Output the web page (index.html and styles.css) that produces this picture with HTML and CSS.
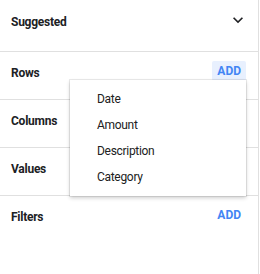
FILE: index.html
```html
<!DOCTYPE html>
<html lang="en">
<head>
    <meta charset="UTF-8">
    <meta name="viewport" content="width=device-width, initial-scale=1.0">
    <title>Pivot table editor</title>
    <link rel="stylesheet" href="styles.css">
</head>
<body>
    <div class="panel">
        <div class="section section-top">
            <div class="section-head">
                <span class="label">Suggested</span>
                <svg class="chevron" width="20" height="20" viewBox="0 0 24 24">
                    <path d="M16.59 8.59L12 13.17 7.41 8.59 6 10l6 6 6-6z" fill="#202124"/>
                </svg>
            </div>
        </div>

        <div class="section has-menu">
            <div class="section-head">
                <span class="label">Rows</span>
                <button class="add active">ADD</button>
            </div>
            <!-- dropdown opened from the Rows ADD button -->
            <ul class="menu">
                <li>Date</li>
                <li>Amount</li>
                <li>Description</li>
                <li>Category</li>
            </ul>
        </div>

        <div class="section">
            <div class="section-head">
                <span class="label">Columns</span>
            </div>
        </div>

        <div class="section">
            <div class="section-head">
                <span class="label">Values</span>
            </div>
        </div>

        <div class="section section-last">
            <div class="section-head">
                <span class="label">Filters</span>
                <button class="add">ADD</button>
            </div>
        </div>
    </div>
</body>
</html>
```

FILE: styles.css
```css
/* Pivot editor side panel */
body {
    margin: 0;
    font-family: Roboto, "Liberation Sans", Arial, sans-serif;
    background-color: #fff;
    color: #202124;
}

.panel {
    width: 258px;
    min-height: 274px;
    border-right: 1px solid #e0e0e0;
}

.section {
    height: 47px;
    border-bottom: 1px solid #e0e0e0;
}

.section-top {
    height: 51px;
}

.section-last {
    border-bottom: none;
}

.has-menu {
    position: relative;
}

.section-head {
    display: flex;
    align-items: center;
    justify-content: space-between;
    height: 20px;
    padding: 9px 12px 0 11px;
}

.section-top .section-head {
    padding-top: 10px;
    padding-right: 10px;
}

.label {
    font-size: 12px;
    font-weight: bold;
    letter-spacing: -0.25px;
    padding-top: 3px;
}

.chevron {
    display: block;
}

.add {
    height: 20px;
    padding: 0 5px;
    border: none;
    border-radius: 2px;
    background: transparent;
    color: #4285f4;
    font-family: inherit;
    font-size: 12px;
    font-weight: bold;
    cursor: pointer;
}

.add.active {
    background-color: #e8f0fe;
}

.menu {
    position: absolute;
    top: 28px;
    right: 12px;
    width: 176px;
    margin: 0;
    padding: 6px 0;
    list-style: none;
    background: #fff;
    box-shadow: 0 0 0 1px rgba(0, 0, 0, 0.08), 0 2px 4px rgba(0, 0, 0, 0.2);
}

.menu li {
    height: 26px;
    line-height: 26px;
    padding-left: 27px;
    font-size: 12px;
    letter-spacing: -0.3px;
    color: #212121;
}
```
